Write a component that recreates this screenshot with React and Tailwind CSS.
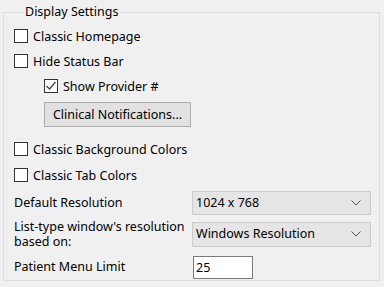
import React from 'react';

const font = { fontFamily: '"Noto Sans", "Liberation Sans", sans-serif' };

const Box = ({ checked }) => (
  <span className="w-[14px] h-[14px] shrink-0 border border-[#333333] bg-white flex items-center justify-center">
    {checked && (
      <svg width="12" height="12" viewBox="0 0 12 12">
        <path d="M1.5 6 L4.5 9 L10.5 2" fill="none" stroke="#444" strokeWidth="1.3" />
      </svg>
    )}
  </span>
);

const Check = ({ label, checked, className = '' }) => (
  <div className={`flex items-center gap-[5px] h-[14px] ${className}`}>
    <Box checked={checked} />
    <span className="leading-[15px]">{label}</span>
  </div>
);

const Select = ({ value, className = '' }) => (
  <div className={`w-[179px] bg-[#e5e5e5] border border-[#cccccc] flex items-center justify-between pl-[3px] pr-[9px] ${className}`}>
    <span>{value}</span>
    <svg width="10" height="6" viewBox="0 0 10 6">
      <path d="M0.5 0.5 L5 5 L9.5 0.5" fill="none" stroke="#555" strokeWidth="1" />
    </svg>
  </div>
);

export default function App() {
  return (
    <div className="w-[384px] h-[287px] bg-[#f0f0f0] pt-[5px] pl-[3px] pr-[4px] text-[12.5px] text-black overflow-hidden" style={font}>
      <fieldset className="border border-[#dcdcdc] h-[276px] pl-[10px] pr-[8px]">
        <legend className="ml-[9px] px-[2px] leading-[14px]">Display Settings</legend>

        <div className="flex flex-col">
          <Check label="Classic Homepage" className="mt-[10px]" />
          <Check label="Hide Status Bar" className="mt-[11px]" />
          <Check label="Show Provider #" checked className="mt-[11px] ml-[30px]" />
          <div className="ml-[30px] mt-[9px]">
            <button className="w-[147px] h-[25px] bg-[#e1e1e1] border border-[#adadad] leading-[14px]">
              Clinical Notifications...
            </button>
          </div>
          <Check label="Classic Background Colors" className="mt-[15px]" />
          <Check label="Classic Tab Colors" className="mt-[12px]" />

          <div className="flex items-center justify-between mt-[9px]">
            <span>Default Resolution</span>
            <Select value="1024 x 768" className="h-[24px]" />
          </div>
          <div className="flex items-center justify-between mt-[4px]">
            <span className="leading-[15px] w-[172px]">List-type window's resolution based on:</span>
            <Select value="Windows Resolution" className="h-[25px]" />
          </div>
          <div className="flex items-center mt-[7px]">
            <span className="w-[179px]">Patient Menu Limit</span>
            <input
              type="text"
              defaultValue="25"
              className="w-[60px] h-[23px] bg-white border border-[#7a7a7a] px-[2px] outline-none"
            />
          </div>
        </div>
      </fieldset>
    </div>
  );
}
